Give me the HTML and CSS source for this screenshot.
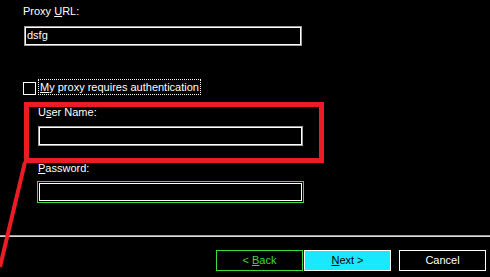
FILE: index.html
```html
<!DOCTYPE html>
<html>
<head>
<meta charset="utf-8">
<link rel="stylesheet" href="styles.css">
</head>
<body>
<div class="page">
  <div class="label">Proxy <u>U</u>RL:</div>
  <div class="field url">dsfg</div>
  <div class="check-row">
    <span class="checkbox"></span>
    <span class="check-label"><u>M</u>y proxy requires authentication</span>
  </div>
  <div class="auth">
    <div class="label user-label">U<u>s</u>er Name:</div>
    <div class="field user"></div>
    <div class="label pass-label"><u>P</u>assword:</div>
    <div class="focus-ring"><div class="field pass"></div></div>
  </div>
  <div class="separator"></div>
  <div class="buttons">
    <div class="btn back">&lt; <u>B</u>ack</div>
    <div class="btn next"><u>N</u>ext &gt;</div>
    <div class="btn cancel">Cancel</div>
  </div>
  <svg class="annotation" width="490" height="277" viewBox="0 0 490 277">
    <rect x="26.5" y="104.5" width="295" height="56" fill="none" stroke="#ed1c24" stroke-width="5"/>
    <line x1="25" y1="162" x2="0" y2="267" stroke="#ed1c24" stroke-width="4"/>
  </svg>
</div>
</body>
</html>
```

FILE: styles.css
```css
html, body {
  margin: 0;
  padding: 0;
  background: #000;
}
body {
  font-family: "Liberation Sans", Arial, sans-serif;
  font-size: 11px;
  line-height: 13px;
  color: #fff;
  width: 490px;
  height: 277px;
  overflow: hidden;
}
.page {
  position: relative;
  width: 490px;
  height: 277px;
  padding-top: 5px;
  box-sizing: border-box;
}
.label {
  margin-left: 23px;
}
.field {
  box-sizing: border-box;
  border: 1px solid #a0a0a0;
  box-shadow: inset 0 0 0 1px #fff;
  background: #000;
  color: #fff;
  height: 20px;
  line-height: 16px;
  padding-left: 2px;
}
.url {
  margin-top: 8px;
  margin-left: 24px;
  width: 278px;
}
.check-row {
  margin-top: 33px;
  margin-left: 23px;
  height: 16px;
  display: flex;
  align-items: center;
  gap: 2px;
}
.checkbox {
  width: 13px;
  height: 13px;
  box-sizing: border-box;
  border: 1px solid #fff;
  margin-top: 2px;
}
.check-label {
  border: 1px dotted #fff;
  height: 16px;
  box-sizing: border-box;
  line-height: 14px;
  padding: 0 1px;
}
.auth {
  padding-left: 15px;
}
.user-label {
  margin-top: 11px;
}
.user {
  margin-top: 7px;
  margin-left: 23px;
  width: 265px;
}
.pass-label {
  margin-top: 16px;
}
.focus-ring {
  margin-top: 6px;
  margin-left: 22px;
  width: 267px;
  height: 22px;
  box-sizing: border-box;
  border: 1px solid #3cdc3c;
  padding: 1px;
}
.pass {
  height: 18px;
  border: 1px solid #fff;
  box-shadow: none;
}
.separator {
  margin-top: 32px;
  height: 1px;
  border-top: 1px solid #a0a0a0;
  background: #d8d8d8;
}
.buttons {
  margin-top: 13px;
  display: flex;
  justify-content: flex-end;
  padding-right: 4px;
}
.btn {
  width: 87px;
  height: 21px;
  box-sizing: border-box;
  border: 1px solid #fff;
  text-align: center;
  line-height: 19px;
}
.back {
  border-color: #3cdc3c;
  color: #3cdc3c;
  margin-right: 1px;
}
.next {
  background: #1ae8ff;
  color: #000;
  margin-right: 8px;
}
.annotation {
  position: absolute;
  left: 0;
  top: 0;
  pointer-events: none;
}
```
